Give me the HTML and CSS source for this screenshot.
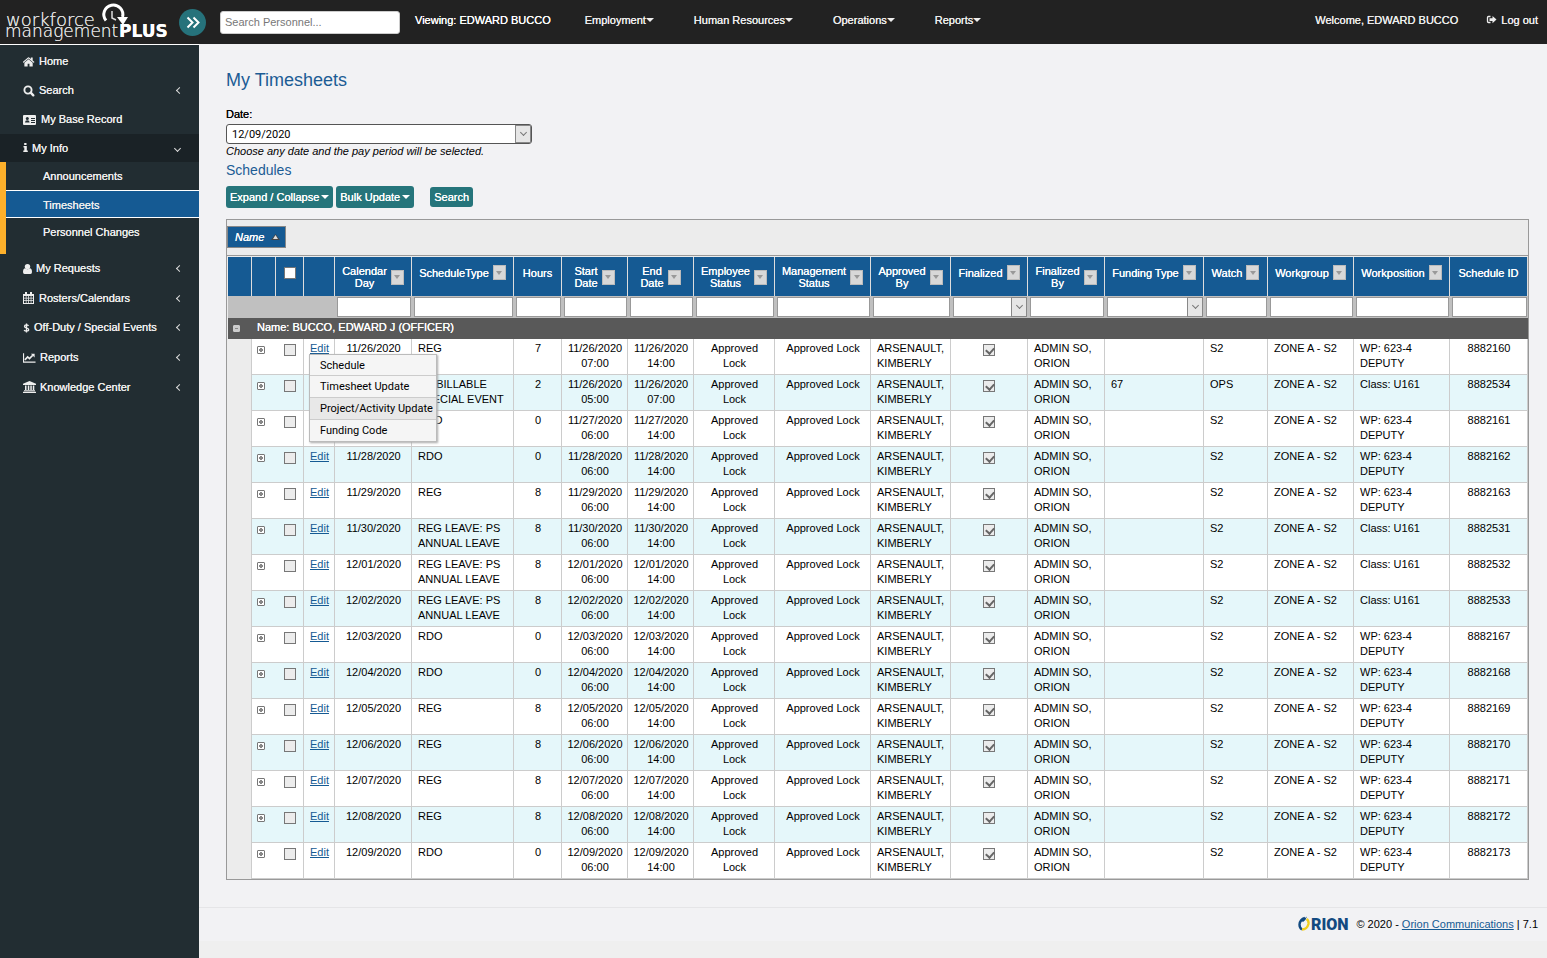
FILE: index.html
```html
<!DOCTYPE html>
<html lang="en">
<head>
<meta charset="utf-8">
<title>My Timesheets</title>
<link rel="stylesheet" href="styles.css">
</head>
<body>
<header class="topbar">
  <svg class="logo" width="166" height="44" viewBox="0 0 166 44" role="img" aria-label="workforce management PLUS">
    <text class="logo-thin" x="1" y="26" font-size="18">workforce</text>
    <text class="logo-thin" x="0" y="37" font-size="17">management</text>
    <text class="logo-bold" x="114" y="37" font-size="17">PLUS</text>
    <path d="M101 20.500A9.500 9.500 0 1 1 117.500 17" fill="none" stroke="#fff" stroke-width="3"/>
    <path d="M112 17h11l-5 8z" fill="#fff"/>
    <path d="M107 11v7l4 2" fill="none" stroke="#ddd" stroke-width="1.500"/>
  </svg>
  <button class="toggle" aria-label="Toggle menu"><svg width="14" height="13" viewBox="0 0 14 13"><path d="M1.500 1.500l5 5-5 5M7.500 1.500l5 5-5 5" fill="none" stroke="#fff" stroke-width="2"/></svg></button>
  <input class="search" type="text" placeholder="Search Personnel..." aria-label="Search Personnel">
  <span class="viewing">Viewing: EDWARD BUCCO</span>
  <nav class="topnav">
    <button>Employment<i class="caret"></i></button>
    <button>Human Resources<i class="caret"></i></button>
    <button>Operations<i class="caret"></i></button>
    <button>Reports<i class="caret"></i></button>
  </nav>
  <div class="account">
    <span>Welcome, EDWARD BUCCO</span>
    <a href="#"><svg width="11" height="10" viewBox="0 0 11 10"><path d="M4.500 1.500h-2q-1 0-1 1v4q0 1 1 1h2" fill="none" stroke="#eee" stroke-width="1.300"/><path d="M3.500 3.200h3V1L10.500 4.600 6.500 8.200V6h-3z" fill="#eee"/></svg>Log out</a>
  </div>
</header>
<div class="layout">
  <nav class="sidebar">
    <a href="#" class="item"><svg width="12" height="12" viewBox="64 128 1664 1536"><path fill="#eee" d="M1408 992v480q0 26-19 45t-45 19h-384v-384h-256v384h-384q-26 0-45-19t-19-45v-480q0-1 .5-3t.5-3l575-474 575 474q1 2 1 6zm223-69l-62 74q-8 9-21 11h-3q-13 0-21-7l-692-577-692 577q-12 8-24 7-13-2-21-11l-62-74q-8-10-7-23.500t11-21.500l719-599q32-26 76-26t76 26l244 204v-195q0-14 9-23t23-9h192q14 0 23 9t9 23v408l219 182q10 8 11 21.500t-7 23.500z"/></svg>Home</a>
    <a href="#" class="item"><svg width="12" height="12" viewBox="0 0 12 12"><circle cx="5" cy="5" r="3.600" fill="none" stroke="#eee" stroke-width="1.900"/><path d="M7.700 7.700l2.600 2.600" stroke="#eee" stroke-width="2.400" stroke-linecap="round"/></svg>Search<i class="arrow"></i></a>
    <a href="#" class="item"><svg width="14" height="12" viewBox="0 0 14 12"><rect x="0" y="1" width="13" height="10" rx="1" fill="#eee"/><circle cx="4.300" cy="4.500" r="1.500" fill="#222d32"/><path d="M2 8.500q0-2.300 2.300-2.300t2.300 2.300zM8 4h4v1H8zM8 6h4v1H8zM8 8h4v1H8z" fill="#222d32"/></svg>My Base Record</a>
    <a href="#" class="item open"><svg width="5" height="12" viewBox="0 0 5 12"><path d="M1.200 1h2.300v2H1.200zM.5 4h3.300v4.600h1V10H.3V8.600h1V5.400H.5z" fill="#eee"/></svg>My Info<i class="arrow down"></i></a>
    <div class="submenu">
      <a href="#">Announcements</a>
      <a href="#" class="current">Timesheets</a>
      <a href="#">Personnel Changes</a>
    </div>
    <div class="sections">
      <a href="#" class="item"><svg width="9" height="12" viewBox="0 0 9 12"><circle cx="4.500" cy="3.600" r="2.700" fill="#eee"/><path d="M0 9q0-3.500 2.300-3.700 2.200 1.800 4.400 0Q9 5.500 9 9q0 2-1.500 2h-6Q0 11 0 9z" fill="#eee"/></svg>My Requests<i class="arrow"></i></a>
      <a href="#" class="item"><svg width="12" height="12" viewBox="0 0 12 12"><path fill="#eee" fill-rule="evenodd" d="M0 2h2V0h2v2h3V0h2v2h2v10H0zM1 4v1.800h1.800V4zm2.500 0v1.800h1.700V4zm2.500 0v1.800h1.700V4zm2.400 0v1.800H10V4zM1 6.500v1.800h1.800V6.500zm2.500 0v1.800h1.700V6.500zm2.500 0v1.800h1.700V6.500zm2.400 0v1.800H10V6.500zM1 9v2h1.800V9zm2.500 0v2h1.700V9zM6 9v2h1.700V9zm2.400 0v2H10V9z"/></svg>Rosters/Calendars<i class="arrow"></i></a>
      <a href="#" class="item"><svg width="7" height="12" viewBox="0 0 8 12"><path d="M6.300 3.500Q5.500 2.500 4 2.500 1.700 2.500 1.700 4q0 1.300 2.100 1.900Q6.500 6.500 6.500 8 6.500 9.500 4 9.500 2.200 9.500 1.200 8.400M4 .8v10.400" fill="none" stroke="#eee" stroke-width="1.500"/></svg>Off-Duty / Special Events<i class="arrow"></i></a>
      <a href="#" class="item"><svg width="13" height="12" viewBox="0 0 14 12"><path d="M.6 1v9.400H13.500" fill="none" stroke="#eee" stroke-width="1.200"/><path d="M2 8l3-3.200 2 1.900L10.500 3" fill="none" stroke="#eee" stroke-width="1.800"/><path d="M8.500 1.500h4v4z" fill="#eee"/></svg>Reports<i class="arrow"></i></a>
      <a href="#" class="item"><svg width="13" height="12" viewBox="0 0 13 12"><path fill="#eee" d="M6.500 0L13 2.800V4H0V2.800zM2 4.500h1.500v4.500H2zm2.800 0h1.500v4.500H4.800zm2.500 0h1.500v4.500H7.300zm2.500 0h1.500v4.500H9.800zM1 9.300h11v1H1zM0 10.700h13V12H0z"/></svg>Knowledge Center<i class="arrow"></i></a>
    </div>
  </nav>
  <div class="page">
    <main class="content">
      <h1>My Timesheets</h1>
      <label class="date-label" for="date">Date:</label>
      <div class="combo"><input id="date" type="text" value="12/09/2020"><button class="drop" aria-label="Open calendar"><i class="vee"></i></button></div>
      <p class="hint">Choose any date and the pay period will be selected.</p>
      <h2>Schedules</h2>
      <div class="actions">
        <button>Expand / Collapse<i class="caret"></i></button>
        <button>Bulk Update<i class="caret"></i></button>
        <button class="find">Search</button>
      </div>
      <section class="grid">
        <div class="grouping"><button>Name<svg width="9" height="6" viewBox="0 0 9 6"><path d="M4.500 0L9 6H0z" fill="#444"/><path d="M4.500 1L7 5H2z" fill="#ddd"/></svg></button></div>
        <table>
          <colgroup id="cols"></colgroup>
          <thead>
            <tr id="heads"></tr>
            <tr id="filters" class="filters"></tr>
          </thead>
          <tbody id="rows">
            <tr class="group"><td><button class="sign minus" aria-label="Collapse group"></button></td><td colspan="18">Name: BUCCO, EDWARD J (OFFICER)</td></tr>
          </tbody>
        </table>
      </section>
    </main>
    <footer>
      <svg width="52" height="18" viewBox="0 0 52 18" role="img" aria-label="Orion"><path d="M7 3Q2 4.500 1.500 9.500 1.500 13 4 14.500" fill="none" stroke="#134a80" stroke-width="2.400"/><path d="M4 14.500Q9 14.500 10.500 9 11 5.500 8.500 4" fill="none" stroke="#f2cf1d" stroke-width="2.400"/><path d="M3 5.500Q6 4 9 1.500 8 5 5 7z" fill="#134a80"/><text class="orion" x="13" y="15" font-size="16">RION</text></svg>
      <span>© 2020 - <a href="#">Orion Communications</a> | 7.1</span>
    </footer>
  </div>
</div>
<script src="app.js"></script>
</body>
</html>
```
FILE: styles.css
```css
* { box-sizing: border-box; }
body {
  margin: 0;
  min-height: 100vh;
  display: flex;
  flex-direction: column;
  font: 11px/15px "Liberation Sans", Arial, sans-serif;
  color: #000;
  background: #f2f2f4;
}
button, input, select { font: inherit; color: inherit; text-shadow: inherit; margin: 0; padding: 0; border: 0; border-radius: 0; }
button { background: none; cursor: pointer; }
a { color: inherit; text-decoration: none; }
svg { flex: none; }

.caret { display: inline-block; border: 4px solid transparent; border-top-color: currentColor; border-bottom: 0; vertical-align: 2px; }

.topbar {
  height: 44px;
  display: flex;
  align-items: center;
  padding: 0 9px 4px 5px;
  background: #222;
  color: #eee;
  text-shadow: 0 0 0 currentColor;
}
.logo { margin-bottom: -4px; }
.logo-thin { font-family: "DejaVu Sans Light", "DejaVu Sans", sans-serif; font-weight: 200; fill: #ddd; }
.logo-bold { font-family: "DejaVu Sans", sans-serif; font-weight: bold; fill: #fff; }
.toggle {
  width: 27px; height: 27px;
  margin: 4px 14px 0 8px;
  border-radius: 50%;
  background: #26727b;
  display: flex; align-items: center; justify-content: center;
  flex: none;
}
.search { width: 180px; height: 23px; margin-top: 4px; padding: 0 4px; background: #fff; border: 1px solid #ccc; border-radius: 3px; color: #555; text-shadow: none; }
.search::placeholder { color: #777; }
.viewing { margin-left: 15px; color: #fff; white-space: nowrap; }
.topnav { display: flex; gap: 40px; margin-left: 34px; white-space: nowrap; }
.account { display: flex; gap: 28px; margin-left: auto; white-space: nowrap; }
.account a { display: flex; align-items: center; gap: 4px; }

.layout { flex: 1; display: flex; }
.sidebar {
  flex: none;
  width: 199px;
  padding-top: 2px;
  border-top: 1px solid #fff;
  background: #222d32;
  color: #eee;
  text-shadow: 0 0 0 currentColor;
}
.item { display: flex; align-items: center; gap: 4px; height: 29px; padding: 0 17px 0 23px; }
.item.open { height: 28px; background: #1a2226; }
.arrow { width: 5px; height: 5px; margin-left: auto; border: solid #ddd; border-width: 0 0 1px 1px; transform: rotate(45deg); }
.arrow.down { margin-right: 2px; transform: rotate(-45deg); }
.submenu { height: 92px; border-left: 6px solid #fdb02b; }
.submenu a { display: block; height: 28px; padding-left: 37px; line-height: 29px; }
.submenu a.current { line-height: 28px; border: solid #fff; border-width: 1px 0; background: #155a93; }
.sections { height: 148px; display: flex; flex-direction: column; }
.sections .item { flex: 1; }

.page { flex: 1; min-width: 0; border-bottom: 17px solid #efefef; }
.content { padding: 25px 18px 27px 27px; }
h1, h2 { margin: 0; font-weight: normal; color: #1c5c94; }
h1 { font-size: 18px; line-height: 22px; }
h2 { font-size: 14px; line-height: 18px; margin-top: 2px; }
.date-label { display: block; margin: 16px 0 2px; text-shadow: 0 0 0 currentColor; }
.combo { display: flex; width: 306px; height: 20px; border: 1px solid #555; border-radius: 3px; background: #fff; }
.combo input { flex: 1; min-width: 0; padding: 0 5px; background: none; font-family: Roboto, sans-serif; }
.drop { width: 16px; border: 1px solid #888; background: #e6e6e6; display: flex; align-items: center; justify-content: center; }
.vee { width: 5px; height: 5px; margin-bottom: 3px; border: solid #777; border-width: 0 1px 1px 0; transform: rotate(45deg); }
.hint { margin: 0; font-style: italic; }
.actions { display: flex; align-items: center; gap: 3px; margin: 7px 0 11px; }
.actions button { height: 22px; padding: 0 4px; border-radius: 3px; background: #26757b; color: #fff; text-shadow: 0 0 0 currentColor; }
.actions .caret { margin-left: 2px; }
.actions .find { height: 20px; margin-left: 13px; }

.grid { border: 1px solid #999; background: #ececec; }
.grouping { height: 36px; padding-top: 6px; border-bottom: 1px solid #999; margin-bottom: 1px; }
.grouping button { display: flex; align-items: center; gap: 7px; width: 59px; height: 22px; padding-left: 7px; border: 1px solid #888; background: #155a93; color: #fff; font-style: italic; text-shadow: 0 0 0 currentColor; }
table { width: 100%; table-layout: fixed; border-spacing: 0; border-left: 1px solid #ececec; }
th { height: 39px; padding: 8px 0 0; vertical-align: top; font-weight: normal; line-height: 12px; background: #155a93; color: #fff; border-right: 1px solid #ddd; text-shadow: 0 0 0 currentColor; }
.head { display: flex; align-items: center; justify-content: center; gap: 4px; min-height: 15px; }
.menu-btn { flex: none; width: 13px; height: 15px; border: 1px solid #bbb; background: #d8d8d8; display: flex; align-items: center; justify-content: center; }
.menu-btn i { border: 3px solid transparent; border-top: 4px solid #999; border-bottom: 0; }
.filters td { height: 22px; padding: 0 1px 0 2px; background: #c0c0c0; border: 0; vertical-align: middle; }
.filters input, .filters select { display: block; width: 100%; height: 20px; background: #fff; border: 1px solid #999; }
.filters select { appearance: none; }
.filter { display: flex; position: relative; }
.filter .drop { position: absolute; right: 0; top: 0; height: 20px; pointer-events: none; }
td { height: 36px; padding: 2px 4px 3px 6px; vertical-align: top; border: solid #ccc; border-width: 0 1px 1px 0; background: #fff; }
.group td { height: 21px; padding: 2px 0 4px 5px; border: 0; background: #595959; color: #fff; text-shadow: 0 0 0 currentColor; }
.alt td { background: #e5f7fa; }
tbody tr td.gutter { background: #ececec; border-bottom: 0; }
.center { text-align: center; }
td.center { padding: 2px 4px 3px 5px; }
td.expand { padding-left: 5px; border-right: 0; }
td.tick { padding: 2px 5px 3px; text-align: center; }
.sign { position: relative; display: block; width: 8px; height: 8px; margin: 5px 0 0; border: 1px solid #777; border-radius: 1px; background: #fff; }
.sign::before, .sign::after { content: ""; position: absolute; background: #888; }
.sign::before { left: 1px; right: 1px; top: 2px; height: 2px; }
.sign::after { top: 1px; bottom: 1px; left: 2px; width: 2px; }
.minus { width: 7px; height: 7px; border-color: #ccc; background: #ccc; }
.minus::before { top: 2px; height: 1px; }
.minus::after { display: none; }
input[type=checkbox] { appearance: none; display: inline-block; position: relative; width: 12px; height: 12px; margin: 3px 0 0; border: 1px solid #777; background: #ececec; vertical-align: top; }
th input[type=checkbox] { margin: 0; background: #fff; }
input[type=checkbox]:checked::after { content: ""; position: absolute; left: 3px; top: 1px; width: 4px; height: 6px; border: solid #666; border-width: 0 2px 2px 0; transform: rotate(42deg); }
td.edit { position: relative; overflow: visible; }
.edit > a, footer a { color: #155a93; text-decoration: underline; }
.menu { position: absolute; z-index: 1; left: 5px; top: 15px; width: 128px; margin: 0; padding: 0; list-style: none; border: 1px solid #bbb; background: #f5f5f5; box-shadow: 1px 1px 2px #aaa; font-family: Roboto, sans-serif; }
.menu button { display: block; width: 100%; height: 22px; padding-left: 10px; border-bottom: 1px solid #ccc; text-align: left; white-space: nowrap; }
.menu li:first-child button { height: 21px; }
.menu li:last-child button { height: 21px; border-bottom: 0; }
.menu li:nth-child(3) button { background: #e8e8e8; }

footer { display: flex; align-items: center; justify-content: flex-end; gap: 6px; padding: 7px 9px 8px 0; border-top: 1px solid #e5e5e7; }
.orion { font-family: "Roboto", sans-serif; font-weight: 900; fill: #134a80; }
```
FILE: app.js
```js
const widths = [24, 24, 28, 31, 77, 102, 48, 66, 66, 81, 96, 80, 77, 77, 99, 64, 86, 96, 78];
// [label, has column menu, filter kind]
const columns = [
  ["Calendar<br>Day", 1], ["ScheduleType", 1], ["Hours", 0], ["Start<br>Date", 1], ["End<br>Date", 1],
  ["Employee<br>Status", 1], ["Management<br>Status", 1], ["Approved<br>By", 1], ["Finalized", 1, "select"],
  ["Finalized<br>By", 1], ["Funding Type", 1, "select"], ["Watch", 1], ["Workgroup", 1], ["Workposition", 1], ["Schedule ID", 0]
];
const leave = "REG LEAVE: PS ANNUAL LEAVE", wp = "WP: 623-4 DEPUTY", cls = "Class: U161";
// [day, type, hours, start, end, funding, watch, position, id]
const data = [
  ["11/26/2020", "REG", 7, "07:00", "14:00", "", "S2", wp, 8882160],
  ["11/26/2020", "OT BILLABLE SPECIAL EVENT", 2, "05:00", "07:00", "67", "OPS", cls, 8882534],
  ["11/27/2020", "RDO", 0, "06:00", "14:00", "", "S2", wp, 8882161],
  ["11/28/2020", "RDO", 0, "06:00", "14:00", "", "S2", wp, 8882162],
  ["11/29/2020", "REG", 8, "06:00", "14:00", "", "S2", wp, 8882163],
  ["11/30/2020", leave, 8, "06:00", "14:00", "", "S2", cls, 8882531],
  ["12/01/2020", leave, 8, "06:00", "14:00", "", "S2", cls, 8882532],
  ["12/02/2020", leave, 8, "06:00", "14:00", "", "S2", cls, 8882533],
  ["12/03/2020", "RDO", 0, "06:00", "14:00", "", "S2", wp, 8882167],
  ["12/04/2020", "RDO", 0, "06:00", "14:00", "", "S2", wp, 8882168],
  ["12/05/2020", "REG", 8, "06:00", "14:00", "", "S2", wp, 8882169],
  ["12/06/2020", "REG", 8, "06:00", "14:00", "", "S2", wp, 8882170],
  ["12/07/2020", "REG", 8, "06:00", "14:00", "", "S2", wp, 8882171],
  ["12/08/2020", "REG", 8, "06:00", "14:00", "", "S2", wp, 8882172],
  ["12/09/2020", "RDO", 0, "06:00", "14:00", "", "S2", wp, 8882173]
];
const el = id => document.getElementById(id);
const plain = s => s.replace("<br>", " ");

el("cols").innerHTML = widths.map(w => `<col style="width:${w}px">`).join("");

el("heads").innerHTML =
  `<th></th><th></th><th><div class="head"><input type="checkbox" aria-label="Select all"></div></th><th></th>` +
  columns.map(([label, menu]) =>
    `<th><div class="head"><span>${label}</span>${menu ? `<button class="menu-btn" aria-label="${plain(label)} menu"><i></i></button>` : ""}</div></th>`
  ).join("");

el("filters").innerHTML = "<td></td>".repeat(4) + columns.map(([label, , kind]) =>
  kind
    ? `<td><div class="filter"><select aria-label="Filter ${plain(label)}"><option></option></select><span class="drop"><i class="vee"></i></span></div></td>`
    : `<td><input type="text" aria-label="Filter ${plain(label)}"></td>`
).join("");

const menu = `<ul class="menu">${["Schedule", "Timesheet Update", "Project/Activity Update", "Funding Code"]
  .map(t => `<li><button>${t}</button></li>`).join("")}</ul>`;

el("rows").insertAdjacentHTML("beforeend", data.map(([day, type, hours, start, end, fund, watch, pos, id], i) => `
<tr class="${i % 2 ? "alt" : ""}">
  <td class="gutter"></td>
  <td class="expand"><button class="sign" aria-label="Expand row"></button></td>
  <td class="tick"><input type="checkbox" aria-label="Select ${id}"></td>
  <td class="edit"><a href="#">Edit</a>${i ? "" : menu}</td>
  <td class="center">${day}</td><td>${type}</td><td class="center">${hours}</td>
  <td class="center">${day} ${start}</td><td class="center">${day} ${end}</td>
  <td class="center">Approved Lock</td><td class="center">Approved Lock</td>
  <td>ARSENAULT, KIMBERLY</td>
  <td class="tick"><input type="checkbox" checked disabled aria-label="Finalized"></td>
  <td>ADMIN SO, ORION</td><td>${fund}</td><td>${watch}</td><td>ZONE A - S2</td><td>${pos}</td>
  <td class="center">${id}</td>
</tr>`).join(""));
```
